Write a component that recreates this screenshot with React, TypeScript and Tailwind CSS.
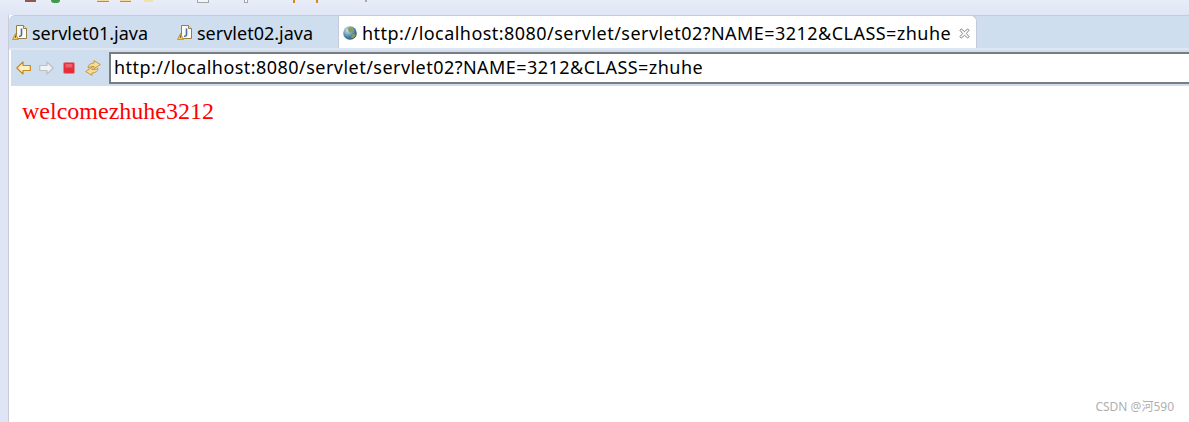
const font = "font-['Microsoft_YaHei','Noto_Sans','Open_Sans',sans-serif]";

const JavaFileIcon = () => (
  <svg width="15" height="16" viewBox="0 0 15 16" className="shrink-0">
    <path d="M4.500.5h7l3 3v10h-10z" fill="#fdfbf2" stroke="#9a7d45" />
    <path d="M11.500.5v3h3" fill="#efe4c4" stroke="#9a7d45" />
    <path d="M9.500 3.500v6q0 2-2.500 1.700" fill="none" stroke="#3f6fb5" strokeWidth="1.600" />
    <path d="M3.500 8.500l3 6h-6z" fill="#f3c65a" stroke="#b98a2e" strokeWidth="0.800" />
    <path d="M3.500 10.500v2.200" stroke="#7a5510" strokeWidth="1" />
  </svg>
);

const GlobeIcon = () => (
  <svg width="14" height="14" viewBox="0 0 14 14" className="shrink-0">
    <defs>
      <radialGradient id="globe" cx="0.350" cy="0.300" r="0.800">
        <stop offset="0" stopColor="#cfe6ee" />
        <stop offset="0.600" stopColor="#4d86a6" />
        <stop offset="1" stopColor="#24465f" />
      </radialGradient>
    </defs>
    <circle cx="7" cy="7" r="6.800" fill="url(#globe)" />
    <path d="M5.500 1.500q4-.5 5 1.500t-1.500 3-3 0-1-2zM9.500 8q3-.5 3 1t-2.500 3-1.500-2z" fill="#8a9c5c" />
  </svg>
);

const NavArrow = ({ flip, fill, stroke }: { flip?: boolean; fill: string; stroke: string }) => (
  <svg width="15" height="14" viewBox="0 0 15 14" className={flip ? "-scale-x-100" : ""}>
    <path d="M.800 7 7 1v3.500h7.300v5H7V13z" fill={fill} stroke={stroke} strokeWidth="1.200" strokeLinejoin="round" />
  </svg>
);

const StopIcon = () => (
  <svg width="12" height="12" viewBox="0 0 12 12">
    <rect x="0.500" y="0.500" width="11" height="11" rx="1.500" fill="#e62d3a" stroke="#d58a90" />
    <rect x="2.500" y="2" width="7" height="3.500" fill="#f0606a" />
  </svg>
);

const RefreshIcon = () => (
  <svg width="16" height="16" viewBox="0 0 16 16">
    <path d="M3 8Q3 3.500 9 3V.6l6.400 3.900L9 8.600V6.400Q5.500 6.200 3 8z" fill="#f8dc90" stroke="#c0913a" strokeWidth="0.900" strokeLinejoin="round" />
    <path d="M13 8.500Q13 12.500 7 13v2.400L.600 11.500 7 7.400v2.200Q10.500 9.800 13 8.500z" fill="#f8dc90" stroke="#c0913a" strokeWidth="0.900" strokeLinejoin="round" />
  </svg>
);

const CloseIcon = () => (
  <svg width="11" height="11" viewBox="0 0 12 12" className="shrink-0">
    <path
      d="M1 2.500 2.500 1 6 4 9.500 1 11 2.500 8 6l3 3.500L9.500 11 6 8l-3.500 3L1 9.500 4 6z"
      fill="#fff"
      stroke="#777"
      strokeWidth="1"
    />
  </svg>
);

const FileTab = ({ name, width }: { name: string; width: string }) => (
  <div className={`flex items-center gap-[5px] pl-[3px] ${width}`}>
    <JavaFileIcon />
    <span>{name}</span>
  </div>
);

export default function App() {
  const url = "http://localhost:8080/servlet/servlet02?NAME=3212&CLASS=zhuhe";

  return (
    <div className={`relative h-[422px] w-[1189px] overflow-hidden bg-white ${font} text-[18px] text-black`}>
      <div className="h-[15px] bg-gradient-to-b from-[#e9edf8] to-[#dfe5f4]">
        {/* toolbar icons cut off by the top of the picture */}
        <div className="flex h-[3px] items-start overflow-hidden">
          <span className="ml-[25px] h-[2px] w-[11px] bg-[#8a5a4a]" />
          <span className="ml-[15px] h-[3px] w-[9px] rounded-b-full bg-[#3f9a4d]" />
          <span className="ml-[37px] h-[2px] w-[12px] border-b border-[#c98a30] bg-[#f3d9a0]" />
          <span className="ml-[11px] h-[2px] w-[11px] border-b border-[#c98a30] bg-[#f3d9a0]" />
          <span className="ml-[13px] h-[2px] w-[9px] bg-[#efe3a8]" />
          <span className="ml-[44px] h-[3px] w-[12px] border-x border-b border-[#a0a4ac] bg-[#f4f4f4]" />
          <span className="ml-[35px] h-[3px] w-[4px] border-x border-b border-[#a0a4ac] bg-white" />
          <span className="ml-[45px] h-[3px] w-[2px] bg-[#d08a20]" />
          <span className="ml-[21px] h-[3px] w-[2px] bg-[#d08a20]" />
          <span className="ml-[47px] h-[2px] w-[2px] bg-[#a8a8a8]" />
        </div>
      </div>

      <div className="flex h-[407px]">
        <div className="w-[8px] shrink-0 bg-[#dfe5f4]" />
        <div className="flex min-w-0 flex-1 flex-col border-l border-[#c8ccd8]">
          <div className="flex h-[33px] shrink-0 items-center rounded-tl-[6px] border-t border-[#c3cad9] bg-[#cfdeee] pt-[2px]">
            <FileTab name="servlet01.java" width="w-[165px]" />
            <FileTab name="servlet02.java" width="w-[165px]" />
            <div className="mt-[-3px] ml-[-1px] flex h-[35px] w-[639px] items-center gap-[5px] self-start rounded-tr-[6px] border-x border-t border-[#c3cad9] bg-white pl-[4px]">
              <GlobeIcon />
              <span className="whitespace-nowrap tracking-[0.46px]">{url}</span>
              <span className="ml-[3px]">
                <CloseIcon />
              </span>
            </div>
          </div>
          <div className="h-[2px] shrink-0 bg-[#dfe6f2]" />
          <div className="flex h-[36px] shrink-0 items-center border-l-[2px] border-white bg-[#cfdeee]">
            <div className="flex w-[98px] shrink-0 items-center pl-[5px]">
              <NavArrow fill="#fff0c0" stroke="#c58a20" />
              <span className="ml-[8px] flex">
                <NavArrow flip fill="#f2f2f2" stroke="#bcc0c4" />
              </span>
              <span className="ml-[9px] flex">
                <StopIcon />
              </span>
              <span className="ml-[10px] -mt-[1px] flex">
                <RefreshIcon />
              </span>
            </div>
            <div className="flex h-[32px] flex-1 items-center border-y-2 border-l-2 border-[#7a7d80] bg-white pb-[2px] pl-[3px] tracking-[0.46px]">
              {url}
            </div>
          </div>
          <div className="flex-1 pl-[13px] pt-[10px] font-['Liberation_Serif',serif] text-[24px] leading-[30px] text-[#ff0000]">
            welcomezhuhe3212
          </div>
        </div>
      </div>

      <div className="absolute bottom-[8px] right-[15px] font-['Noto_Sans','Noto_Sans_CJK_SC',sans-serif] text-[12px] leading-[14px] text-[#b0b0b0]">
        CSDN @河590
      </div>
    </div>
  );
}
